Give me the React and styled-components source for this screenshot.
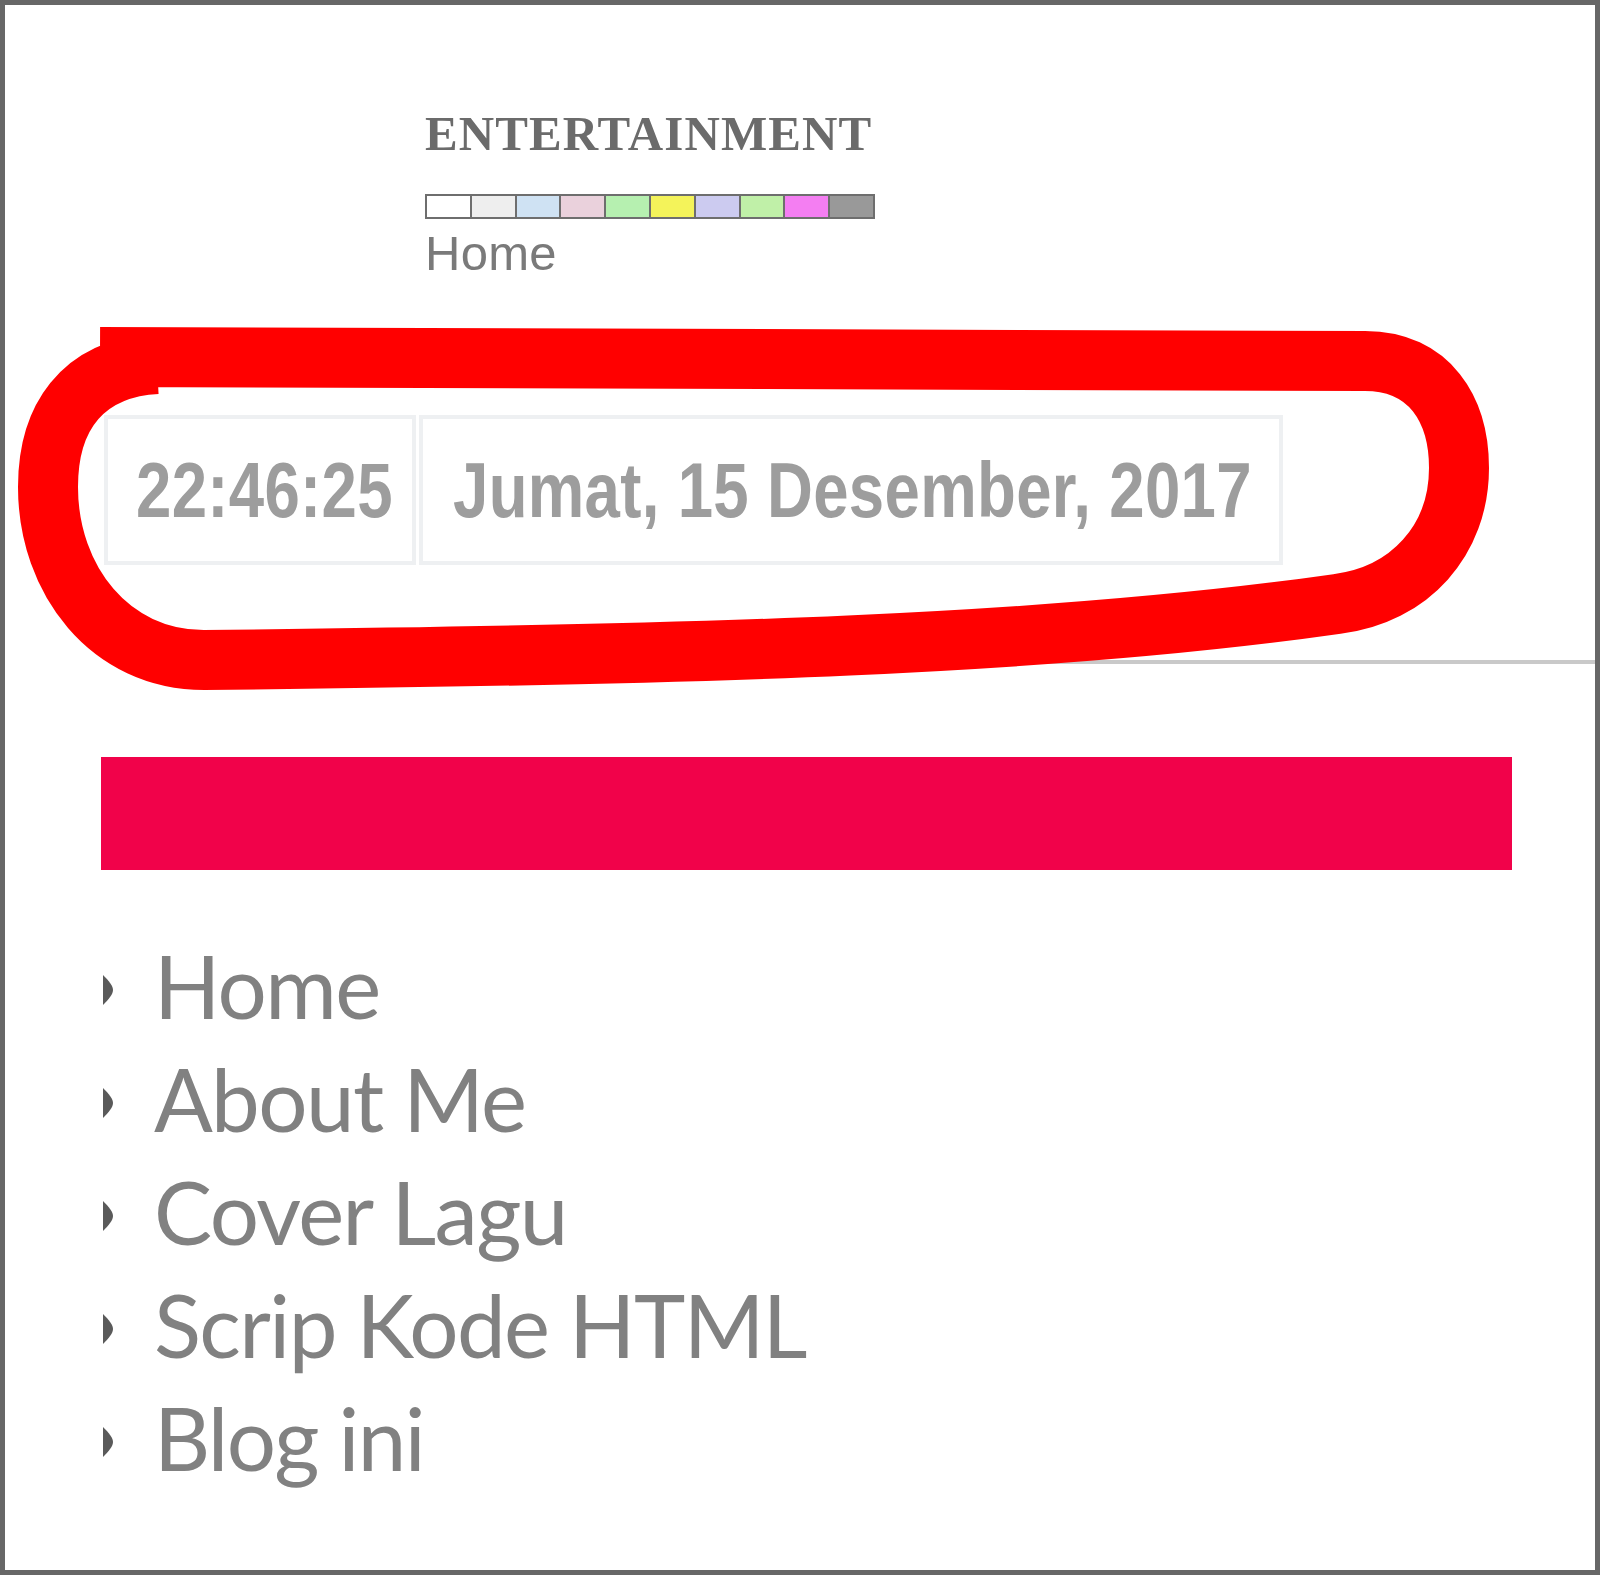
import React from 'react';
import styled, { createGlobalStyle } from 'styled-components';

const GlobalStyle = createGlobalStyle`
  html, body {
    margin: 0;
    padding: 0;
    background: #fff;
  }
  body {
    font-family: "Liberation Sans", Arial, sans-serif;
  }
`;

const Frame = styled.div`
  position: relative;
  width: 1600px;
  height: 1575px;
  box-sizing: border-box;
  border: 5px solid #676767;
  background: #fff;
  overflow: hidden;
`;

const Header = styled.header`
  padding: 104px 0 0 420px;
`;

const BlogTitle = styled.h1`
  margin: 0;
  font-family: "Liberation Serif", "Times New Roman", serif;
  font-weight: 700;
  font-size: 49px;
  line-height: 49px;
  letter-spacing: 1.1px;
  color: #6b6b6b;
`;

const Swatches = styled.div`
  display: flex;
  width: 450px;
  height: 25px;
  margin-top: 36px;
  box-sizing: border-box;
  border: 2px solid #6e6e6e;
`;

const Swatch = styled.span`
  flex: 1;
  background: ${props => props.color};
  & + & {
    border-left: 2px solid #6e6e6e;
  }
`;

const HomeLink = styled.a`
  display: block;
  margin-top: 10px;
  font-size: 49px;
  line-height: 49px;
  letter-spacing: 0.3px;
  color: #7a7a7a;
  text-decoration: none;
`;

const TimeBar = styled.div`
  display: flex;
  gap: 3px;
  height: 150px;
  margin: 137px 0 0 99px;
`;

const TimeCell = styled.div`
  display: flex;
  align-items: center;
  width: ${props => props.width}px;
  box-sizing: border-box;
  padding-left: ${props => props.pad}px;
  border: 4px solid #eef0f2;
  overflow: hidden;
  white-space: nowrap;
  font-family: "Liberation Sans", Arial, sans-serif;
  font-weight: 700;
  font-size: 77px;
  color: #9d9d9d;
  span {
    display: inline-block;
    letter-spacing: 0.4px;
    transform: scaleX(0.825);
    transform-origin: left center;
  }
`;

const Divider = styled.hr`
  margin: 95px 0 0 300px;
  height: 4px;
  border: 0;
  background: #c9c9c9;
`;

const PinkBar = styled.div`
  width: 1411px;
  height: 113px;
  margin: 93px 0 0 96px;
  background: #f1024a;
`;

const Menu = styled.ul`
  list-style: none;
  margin: 59px 0 0;
  padding: 0 0 0 97px;
`;

const MenuItem = styled.li`
  display: flex;
  align-items: center;
  height: 113px;
  font-family: Lato, "Open Sans", sans-serif;
  font-size: 87px;
  letter-spacing: -1.6px;
  color: #818181;
  svg {
    flex: none;
    margin: 8px 40px 0 0;
  }
`;

const Overlay = styled.svg`
  position: absolute;
  top: -5px;
  left: -5px;
  pointer-events: none;
`;

const swatchColors = [
  '#ffffff', '#eeeeee', '#cfe2f3', '#ead1dc', '#b6f0b0',
  '#f4f35a', '#cccbf0', '#c0f0a8', '#f47ef2', '#999999',
];

const pages = ['Home', 'About Me', 'Cover Lagu', 'Scrip Kode HTML', 'Blog ini'];

const Bullet = () => (
  <svg width="12" height="36" viewBox="0 0 12 36">
    <path d="M1 3 C7 9 11 14 11 18 C11 22 7 27 1 33 Z" fill="#5a5a5a" />
  </svg>
);

export default function App() {
  return (
    <>
      <GlobalStyle />
      <Frame>
        <Header>
          <BlogTitle>ENTERTAINMENT</BlogTitle>
          <Swatches>
            {swatchColors.map((c, i) => (
              <Swatch key={i} color={c} />
            ))}
          </Swatches>
          <HomeLink href="#">Home</HomeLink>
        </Header>

        <TimeBar>
          <TimeCell width={312} pad={28}>
            <span>22:46:25</span>
          </TimeCell>
          <TimeCell width={864} pad={30}>
            <span>Jumat, 15 Desember, 2017</span>
          </TimeCell>
        </TimeBar>

        <Divider />

        <PinkBar />

        <Menu>
          {pages.map(p => (
            <MenuItem key={p}>
              <Bullet />
              {p}
            </MenuItem>
          ))}
        </Menu>

        <Overlay width="1600" height="1575" viewBox="0 0 1600 1575">
          <path
            d="M100 357 L1365 361 C1430 361 1459 410 1459 468 C1459 540 1410 595 1337 604 C1050 645 700 655 204 660 C110 660 48 580 48 487 C48 420 80 368 157 364"
            fill="none"
            stroke="#ff0000"
            strokeWidth="60"
            strokeLinejoin="round"
          />
        </Overlay>
      </Frame>
    </>
  );
}
